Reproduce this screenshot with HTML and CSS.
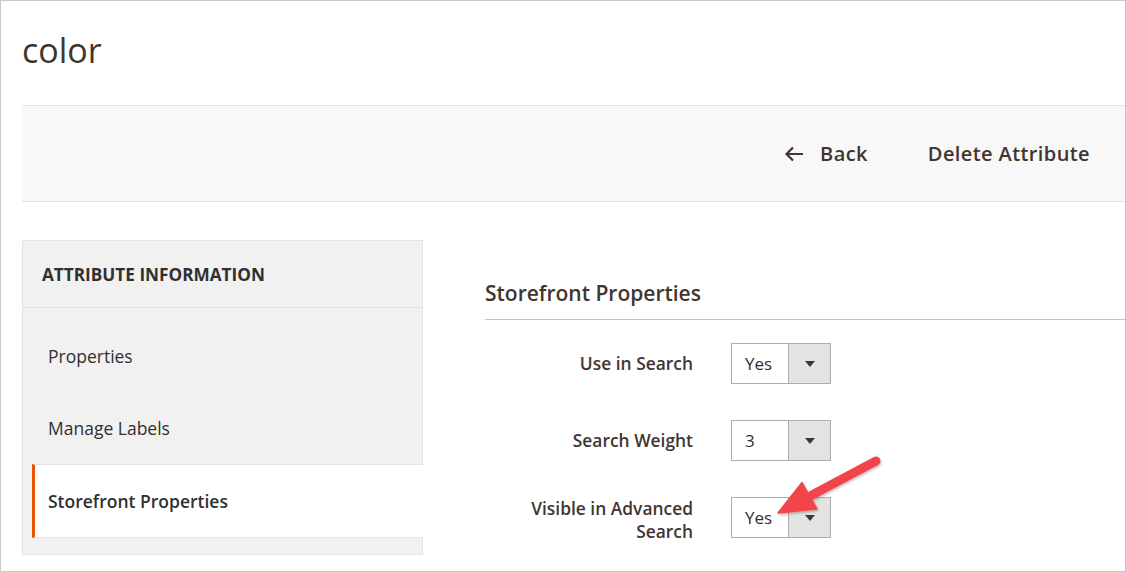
FILE: index.html
```html
<!DOCTYPE html>
<html lang="en">
<head>
<meta charset="utf-8">
<title>color</title>
<link rel="stylesheet" href="styles.css">
</head>
<body>
<div class="page">
  <h1 class="page-title">color</h1>
  <div class="toolbar">
    <button class="action back" type="button">
      <svg class="back-icon" width="20" height="16" viewBox="0 0 20 16" aria-hidden="true">
        <path d="M19 8H2.5M9 1.5L2.5 8L9 14.5" fill="none" stroke="#41362f" stroke-width="2.2"/>
      </svg>
      <span>Back</span>
    </button>
    <button class="action" type="button">Delete Attribute</button>
  </div>
  <div class="main">
    <nav class="side">
      <div class="side-head">ATTRIBUTE INFORMATION</div>
      <ul class="side-list">
        <li class="side-item">Properties</li>
        <li class="side-item">Manage Labels</li>
        <li class="side-item active">Storefront Properties</li>
      </ul>
    </nav>
    <section class="content">
      <h2 class="fs-title">Storefront Properties</h2>
      <div class="fields">
        <div class="field">
          <label class="field-label">Use in Search</label>
          <div class="select"><span class="select-value">Yes</span><span class="select-btn"><i class="caret"></i></span></div>
        </div>
        <div class="field">
          <label class="field-label">Search Weight</label>
          <div class="select"><span class="select-value">3</span><span class="select-btn"><i class="caret"></i></span></div>
        </div>
        <div class="field tall">
          <label class="field-label">Visible in Advanced<br>Search</label>
          <div class="select"><span class="select-value">Yes</span><span class="select-btn"><i class="caret"></i></span></div>
        </div>
      </div>
    </section>
  </div>
  <svg class="annotation" width="1126" height="572" viewBox="0 0 1126 572" aria-hidden="true">
    <defs>
      <filter id="sh" x="-20%" y="-20%" width="140%" height="140%">
        <feDropShadow dx="1" dy="1.5" stdDeviation="1.2" flood-color="#000" flood-opacity="0.25"/>
      </filter>
    </defs>
    <g filter="url(#sh)" fill="#f1454b" stroke="#f1454b">
      <line x1="876" y1="461" x2="812" y2="495" stroke-width="9" stroke-linecap="round"/>
      <polygon points="778,513 802,482.5 817,509" stroke-width="1.5" stroke-linejoin="round"/>
    </g>
  </svg>
</div>
</body>
</html>
```
FILE: styles.css
```css
* { box-sizing: border-box; }
html, body { margin: 0; padding: 0; background: #fff; }
body { font-family: "Open Sans", "Noto Sans", sans-serif; color: #41362f; }

.page {
  position: relative;
  width: 1126px;
  height: 572px;
  border: 1px solid #c9c9c9;
  padding-left: 21px;
  overflow: hidden;
  background: #fff;
}

.page-title {
  margin: 29px 0 35px;
  font-size: 34px;
  line-height: 40px;
  font-weight: 400;
  color: #41362f;
}

.toolbar {
  height: 97px;
  margin-right: -1px;
  background: #f8f8f8;
  border-top: 1px solid #e3e3e3;
  border-bottom: 1px solid #e3e3e3;
  display: flex;
  justify-content: flex-end;
  align-items: center;
  gap: 60px;
  padding-right: 36px;
}

.action {
  font-family: inherit;
  font-size: 20px;
  font-weight: 600;
  letter-spacing: 0.02em;
  color: #41362f;
  background: none;
  border: 0;
  padding: 0;
  display: flex;
  align-items: center;
  gap: 16px;
  line-height: 28px;
}
.back-icon { display: block; }

.main {
  display: flex;
  align-items: flex-start;
  gap: 62px;
  margin-top: 38px;
}

.side {
  flex: 0 0 401px;
  background: #f1f1f1;
  border: 1px solid #e3e3e3;
}
.side-head {
  height: 67px;
  border-bottom: 1px solid #e3e3e3;
  padding-left: 19px;
  display: flex;
  align-items: center;
  font-size: 17.2px;
  font-weight: 700;
  color: #303030;
}
.side-list {
  list-style: none;
  margin: 0 -1px 0 0;
  padding: 12px 0 16px 9px;
}
.side-item {
  height: 72px;
  display: flex;
  align-items: center;
  padding-left: 16px;
  font-size: 17.5px;
  color: #303030;
}
.side-item.active {
  height: 74px;
  background: #fff;
  border-top: 1px solid #e3e3e3;
  border-bottom: 1px solid #e3e3e3;
  border-left: 3px solid #eb5202;
  padding-left: 13px;
  font-weight: 600;
}

.content {
  flex: 1;
  margin-right: -40px;
}
.fs-title {
  margin: 0;
  padding: 39px 0 12px;
  line-height: 28px;
  font-size: 21px;
  font-weight: 600;
  color: #41362f;
  border-bottom: 1px solid #cac3b4;
}

.fields {
  display: flex;
  flex-direction: column;
  gap: 36px;
  padding-top: 23px;
}
.field {
  display: flex;
  align-items: center;
  gap: 38px;
}
.field.tall { align-items: flex-start; }
.field-label {
  width: 208px;
  text-align: right;
  font-size: 17.4px;
  font-weight: 600;
  line-height: 23px;
  color: #41362f;
}

.select {
  width: 100px;
  height: 41px;
  border: 1px solid #adadad;
  background: #fff;
  display: flex;
}
.select-value {
  flex: 1;
  padding-left: 13px;
  font-size: 17px;
  line-height: 39px;
  color: #303030;
}
.select-btn {
  width: 42px;
  background: #e3e3e3;
  border-left: 1px solid #adadad;
  display: flex;
  align-items: center;
  justify-content: center;
}
.caret {
  width: 0;
  height: 0;
  border-left: 5px solid transparent;
  border-right: 5px solid transparent;
  border-top: 6px solid #41362f;
  margin-left: 1px;
}

.annotation {
  position: absolute;
  left: -1px;
  top: -1px;
  pointer-events: none;
}
```
